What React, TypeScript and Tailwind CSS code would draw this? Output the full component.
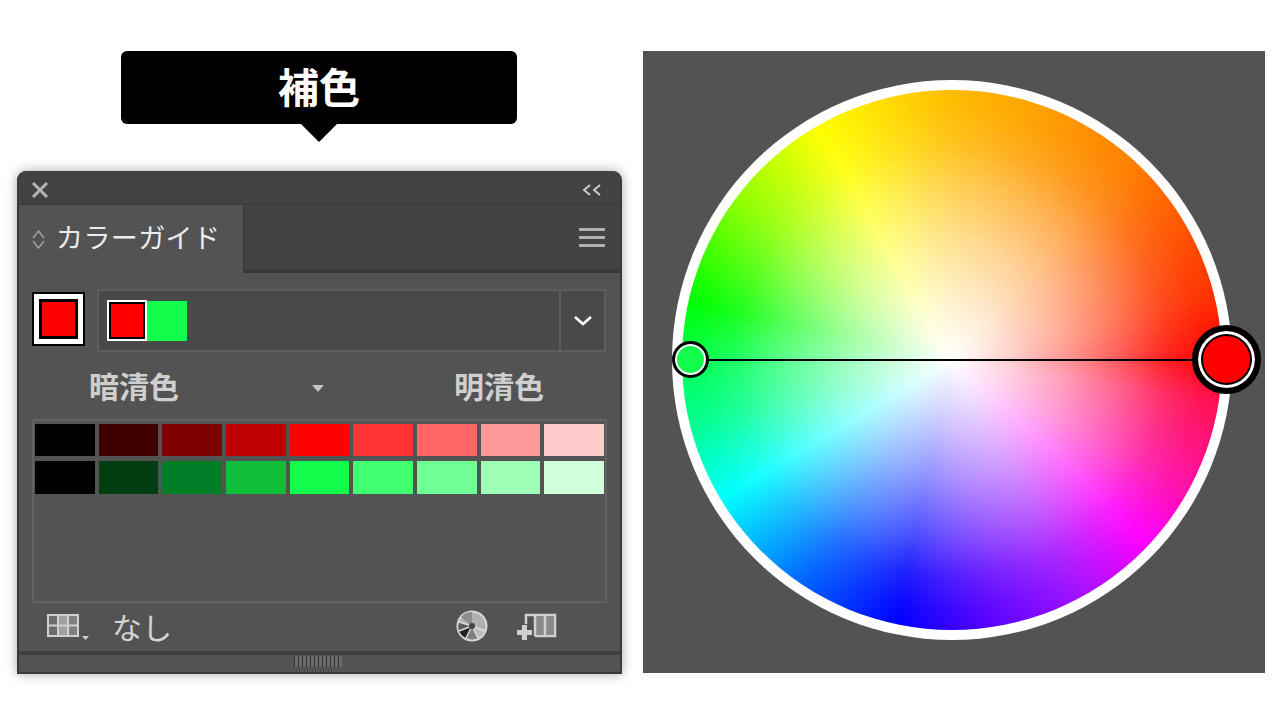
const RED = ["#000000","#3f0000","#7f0000","#bf0000","#ff0000","#ff3333","#ff6666","#ff9999","#ffcccc"];
const GREEN = ["#000000","#013f13","#027f26","#0fbf3a","#11ff4c","#40ff70","#70ff94","#a0ffb7","#cfffdb"];

function Swatches({ colors, h }: { colors: string[]; h: string }) {
  return (
    <div className="grid grid-cols-9 gap-x-[4px]">
      {colors.map((c, i) => (
        <div key={i} className={h} style={{ backgroundColor: c }} />
      ))}
    </div>
  );
}

export default function App() {
  return (
    <div className="w-[1280px] h-[720px] bg-white flex overflow-hidden font-['Noto_Sans_CJK_JP','Noto_Sans',sans-serif]">
      <div className="w-[605px] ml-[17px] flex flex-col">
        <div className="mt-[51px] ml-[104px] w-[396px] h-[73px] bg-black rounded-[6px] flex items-center justify-center pb-[4px] text-white text-[41px] font-bold leading-none tracking-normal">
          補色
        </div>
        <svg className="ml-[284px] shrink-0" width="36" height="18" viewBox="0 0 36 18">
          <path d="M0 0H36L18 18Z" fill="#000" />
        </svg>
        <div className="mt-[29px] h-[503px] flex flex-col bg-[#535353] rounded-t-[9px] border-x-[2px] border-b-[2px] border-[#3a3a3a] shadow-[0_0_12px_rgba(0,0,0,0.35)]">
          <div className="h-[34px] shrink-0 bg-[#424242] rounded-t-[8px] border-b border-[#383838] flex items-center justify-between pt-[5px] pl-[12px] pr-[17px]">
            <svg width="18" height="18" viewBox="0 0 18 18">
              <path d="M2 2L16 16M16 2L2 16" stroke="#b4b4b4" strokeWidth="3" />
            </svg>
            <svg width="21" height="14" viewBox="0 0 21 14">
              <path d="M8 2L2 7L8 12M18 2L12 7L18 12" stroke="#d0d0d0" strokeWidth="1.800" fill="none" />
            </svg>
          </div>
          <div className="h-[68px] shrink-0 flex bg-[#424242]">
            <div className="w-[224px] bg-[#535353] flex items-center pb-[6px] pl-[13px] gap-[11px]">
              <svg className="mt-[6px]" width="13" height="19" viewBox="0 0 13 19">
                <path d="M1 8L6.500 1L12 8M1 11L6.500 18L12 11" fill="none" stroke="#a0a0a0" strokeWidth="1.500" />
              </svg>
              <span className="text-[#ececec] text-[27px] font-normal leading-none tracking-[0.4px]">カラーガイド</span>
            </div>
            <div className="flex-1 border-l border-b-[3px] border-[#373737] flex items-center justify-end pr-[15px]">
              <div className="w-[26px] flex flex-col gap-[5px]">
                <div className="h-[3px] bg-[#b0b0b0]" />
                <div className="h-[3px] bg-[#b0b0b0]" />
                <div className="h-[3px] bg-[#b0b0b0]" />
              </div>
            </div>
          </div>

          <div className="flex-1 flex flex-col px-[13px]">
            <div className="mt-[16px] flex items-start gap-[12px]">
              <div className="mt-[3px] w-[53px] h-[54px] border-[2px] border-black bg-white p-[5px]">
                <div className="w-full h-full border-[3px] border-black bg-[#ff0000]" />
              </div>
              <div className="w-[509px] h-[63px] flex bg-[#494949] border-[2px] border-[#5d5d5d]">
                <div className="flex-1 flex items-center pl-[8px]">
                  <div className="w-[40px] h-[41px] border-[2px] border-white bg-black p-[2px]">
                    <div className="w-full h-full bg-[#ff0000]" />
                  </div>
                  <div className="w-[40px] h-[40px] bg-[#11ff4c]" />
                </div>
                <div className="w-[45px] border-l-[2px] border-[#5d5d5d] flex items-center justify-center">
                  <svg width="20" height="12" viewBox="0 0 20 12">
                    <path d="M2 2L10 9L18 2" fill="none" stroke="#fff" strokeWidth="2.600" />
                  </svg>
                </div>
              </div>
            </div>

            <div className="mt-[15px] h-[40px] flex items-center pb-[4px] text-[#cfcfcf] text-[30px] font-bold leading-none">
              <span className="ml-[57px] w-[90px] whitespace-nowrap">暗清色</span>
              <svg className="ml-[133px] mt-[5px]" width="12" height="8" viewBox="0 0 12 8">
                <path d="M0 1H12L6 8Z" fill="#c4c4c4" />
              </svg>
              <span className="ml-[130px] w-[90px] whitespace-nowrap">明清色</span>
            </div>

            <div className="mt-[12px] w-[575px] h-[184px] border-[2px] border-[#626262] rounded-[3px] px-[1px] pt-[3px] flex flex-col gap-[5px]">
              <Swatches colors={RED} h="h-[32px]" />
              <Swatches colors={GREEN} h="h-[33px]" />
            </div>

            <div className="flex-1 flex items-center pb-[2px] text-[#d4d4d4]">
              <svg className="ml-[15px]" width="44" height="28" viewBox="0 0 44 28">
                <rect x="1" y="3" width="30" height="21" fill="#6c6c6c" />
                <rect x="11" y="3" width="10" height="21" fill="#a0a0a0" />
                <rect x="21" y="3" width="10" height="21" fill="#808080" />
                <rect x="1" y="3" width="30" height="21" fill="none" stroke="#d0d0d0" strokeWidth="2" />
                <path d="M11 3V24M21 3V24M1 13.500H31" stroke="#d0d0d0" strokeWidth="2" />
                <path d="M35 24H42L38.500 28Z" fill="#d0d0d0" />
              </svg>
              <span className="ml-[21px] text-[30px] leading-none whitespace-nowrap">なし</span>
              <svg className="ml-[284px]" width="32" height="32" viewBox="0 0 32 32">
                <circle cx="16" cy="16" r="14.500" fill="#b0b0b0" stroke="#d8d8d8" strokeWidth="2" />
                <path d="M16 16L3 21A14 14 0 0 0 10 28Z" fill="#222" />
                <path d="M16 16L3 12A14 14 0 0 0 3 21Z" fill="#5c5c5c" />
                <path d="M16 16L10 28A14 14 0 0 0 22 28Z" fill="#808080" />
                <path d="M16 16L22 28A14 14 0 0 0 29 21Z" fill="#bcbcbc" />
                <path d="M16 16L5 7A14 14 0 0 1 16 2Z" fill="#8c8c8c" />
                <path d="M3 21L16 16M3 12L16 16M10 28L16 16M22 28L16 16M29 21L16 16" stroke="#dcdcdc" strokeWidth="1.400" />
                <circle cx="16" cy="16" r="3" fill="#444" />
              </svg>
              <svg className="ml-[27px]" width="42" height="28" viewBox="0 0 42 28">
                <path d="M11 12V3H40V24H20" fill="none" stroke="#d0d0d0" strokeWidth="2.500" />
                <rect x="20" y="4" width="19" height="19" fill="#8a8a8a" />
                <path d="M20 3V24M30 3V24" stroke="#d0d0d0" strokeWidth="2.500" />
                <path d="M7 13H12V18H17V23H12V28H7V23H2V18H7Z" fill="#d0d0d0" />
              </svg>
            </div>
          </div>

          <div className="h-[21px] shrink-0 border-t-[4px] border-[#3f3f3f] flex justify-center pt-[1px] pr-[4px]">
            <div className="w-[48px] h-[11px] bg-[repeating-linear-gradient(90deg,#333_0px,#333_1px,#6a6a6a_1px,#6a6a6a_4px)]" />
          </div>
        </div>
      </div>

      <div className="ml-[21px] mt-[51px] w-[622px] h-[622px] bg-[#535353] flex items-center justify-center pr-[4px] pb-[4px]">
        <div className="relative w-[560px] h-[560px] shrink-0 rounded-full bg-white p-[10px]">
          <div className="w-full h-full rounded-full bg-[radial-gradient(circle_closest-side,#ffffff_0%,rgba(255,255,255,0.82)_20%,rgba(255,255,255,0.58)_43%,rgba(255,255,255,0.34)_63%,rgba(255,255,255,0.12)_80%,rgba(255,255,255,0.03)_92%,rgba(255,255,255,0)_100%),conic-gradient(#ffbb00_0deg,#ff8000_42deg,#ff5000_62deg,#ff3000_76deg,#ff0000_90deg,#ff1050_99deg,#ff10a0_117deg,#ff00ff_133deg,#a010ff_152deg,#5000ff_174deg,#0000ff_192deg,#0060ff_213deg,#00ffff_239deg,#00ff90_256deg,#00ff50_270deg,#00ff00_283deg,#90ff00_307deg,#ffff00_330deg,#ffbb00_360deg)]" />
          <div className="absolute left-[35px] top-[279px] h-[2px] w-[490px] bg-black" />
          <div className="absolute left-[0px] top-[261px] w-[37px] h-[37px] rounded-full bg-[#11ff4c] border-[3px] border-black shadow-[inset_0_0_0_2px_#fff]" />
          <div className="absolute left-[520px] top-[245px] w-[69px] h-[69px] rounded-full bg-[#ff0000] border-[6px] border-black shadow-[inset_0_0_0_3px_#fff,inset_0_0_0_5px_#000]" />
        </div>
      </div>
    </div>
  );
}
